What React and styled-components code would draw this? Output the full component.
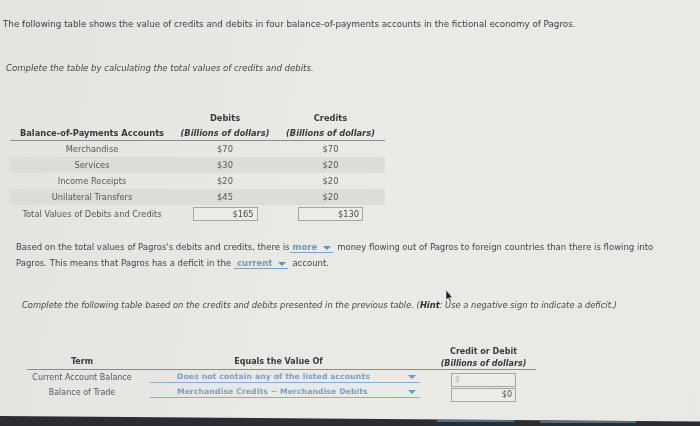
import React from "react";
import styled, { createGlobalStyle } from "styled-components";

const GlobalStyle = createGlobalStyle`
  html, body { margin: 0; padding: 0; }
  body {
    background: #e6e6e2;
    font-family: "DejaVu Sans", Verdana, sans-serif;
  }
`;

const Page = styled.div`
  position: relative;
  width: 700px;
  height: 426px;
  overflow: hidden;
  display: flex;
  flex-direction: column;
  background: linear-gradient(100deg, #e3e3df 0%, #eaeae6 55%, #e8e8e4 100%);
  color: #4d4d4d;
`;

const Content = styled.div`
  flex: 1;
  padding: 18px 0 0 3px;
  filter: blur(0.3px);
`;

const Intro = styled.p`
  margin: 0;
  font-size: 8.75px;
  line-height: 12px;
  color: #3c3c3c;
  white-space: nowrap;
`;

const Instruction = styled.p`
  margin: ${(p) => p.$top}px 0 0 ${(p) => p.$left}px;
  font-size: ${(p) => p.$size}px;
  line-height: 12px;
  font-style: italic;
  color: #474747;
  white-space: nowrap;
  b { font-style: italic; color: #2f2f2f; }
`;

const Table = styled.div`
  display: grid;
  grid-template-columns: ${(p) => p.$cols};
  margin: ${(p) => p.$margin};
  width: max-content;
  font-size: ${(p) => p.$size}px;
`;

const Cell = styled.div`
  height: ${(p) => p.$h || 16}px;
  display: flex;
  align-items: center;
  justify-content: ${(p) => (p.$start ? "flex-start" : "center")};
  white-space: nowrap;
  font-weight: ${(p) => (p.$bold ? 700 : 400)};
  font-style: ${(p) => (p.$italic ? "italic" : "normal")};
  color: ${(p) => (p.$bold || p.$italic ? "#3a3a3a" : "#575757")};
  background: ${(p) => (p.$stripe ? "#dcdcd8" : "transparent")};
  border-bottom: ${(p) => (p.$rule ? "1px solid #8c8c8a" : "none")};
  box-sizing: border-box;
  padding: ${(p) => p.$pad || "0"};
`;

const Box = styled.div`
  width: 65px;
  height: 14px;
  box-sizing: border-box;
  border: 1px solid #a5a5a2;
  background: #ebebe8;
  display: flex;
  align-items: center;
  justify-content: ${(p) => (p.$left ? "flex-start" : "flex-end")};
  padding: 0 3px;
  color: ${(p) => (p.$faint ? "#b3b3b3" : "#4a4a4a")};
`;

const Paragraph = styled.p`
  margin: 17px 0 0 13px;
  font-size: 8.5px;
  line-height: 16px;
  color: #444;
  white-space: nowrap;
`;

const Choice = styled.span`
  display: inline-flex;
  align-items: center;
  gap: 6px;
  color: #6f98bd;
  border-bottom: 1px solid #7aa3c6;
  padding: 0 2px 0 3px;
  margin: 0 4px 0 ${(p) => p.$ml}px;
  line-height: 9px;
  font-weight: 700;
`;

const Arrow = styled.span`
  width: 0;
  height: 0;
  border-left: 4px solid transparent;
  border-right: 4px solid transparent;
  border-top: 4px solid ${(p) => p.$color || "#5d8fbd"};
`;

const Select = styled.div`
  width: 270px;
  height: 11px;
  box-sizing: border-box;
  border-bottom: 1px solid #86aed0;
  display: flex;
  align-items: center;
  justify-content: space-between;
  padding: 0 4px 1px 27px;
  color: #7a9fc2;
  font-weight: 700;
  font-size: 7.7px;
  letter-spacing: 0.1px;
`;

const Cursor = styled.svg`
  position: absolute;
  left: 445px;
  top: 289px;
`;

const BottomBar = styled.div`
  position: relative;
  height: 10px;
  background: #2b2d33;
  clip-path: polygon(0 0, 100% 55%, 100% 100%, 0 100%);
`;

const Tab = styled.div`
  position: absolute;
  top: ${(p) => p.$top}px;
  left: ${(p) => p.$left}px;
  width: ${(p) => p.$w}px;
  height: 2px;
  background: #4f6d8a;
`;

const rows = [
  ["Merchandise", "$70", "$70"],
  ["Services", "$30", "$20"],
  ["Income Receipts", "$20", "$20"],
  ["Unilateral Transfers", "$45", "$20"],
];

export default function App() {
  return (
    <Page>
      <GlobalStyle />
      <Content>
        <Intro>
          The following table shows the value of credits and debits in four balance-of-payments accounts in the fictional economy of Pagros.
        </Intro>
        <Instruction $top={32} $left={3} $size={8.55}>
          Complete the table by calculating the total values of credits and debits.
        </Instruction>

        <Table $cols="164px 102px 109px" $margin="37px 0 0 7px" $size={8.3}>
          <Cell $h={14} />
          <Cell $h={14} $bold>Debits</Cell>
          <Cell $h={14} $bold>Credits</Cell>
          <Cell $h={16} $bold $rule>Balance-of-Payments Accounts</Cell>
          <Cell $h={16} $italic $bold $rule>(Billions of dollars)</Cell>
          <Cell $h={16} $italic $bold $rule>(Billions of dollars)</Cell>
          {rows.map(([name, d, c], i) => (
            <React.Fragment key={name}>
              <Cell $stripe={i % 2 === 1}>{name}</Cell>
              <Cell $stripe={i % 2 === 1}>{d}</Cell>
              <Cell $stripe={i % 2 === 1}>{c}</Cell>
            </React.Fragment>
          ))}
          <Cell $h={17}>Total Values of Debits and Credits</Cell>
          <Cell $h={17}><Box>$165</Box></Cell>
          <Cell $h={17}><Box>$130</Box></Cell>
        </Table>

        <Paragraph>
          Based on the total values of Pagros's debits and credits, there is
          <Choice $ml={0}>more <Arrow /></Choice>
          money flowing out of Pagros to foreign countries than there is flowing into
          <br />
          Pagros. This means that Pagros has a deficit in the
          <Choice $ml={3}>current <Arrow /></Choice>
          account.
        </Paragraph>

        <Instruction $top={28} $left={19} $size={8.36}>
          Complete the following table based on the credits and debits presented in the previous table. (<b>Hint</b>: Use a negative sign to indicate a deficit.)
        </Instruction>

        <Table $cols="110px 283px 116px" $margin="34px 0 0 24px" $size={8}>
          <Cell $h={13} />
          <Cell $h={13} />
          <Cell $h={13} $bold $pad="0 0 0 11px">Credit or Debit</Cell>
          <Cell $h={12} $bold $rule $pad="0 0 5px 0">Term</Cell>
          <Cell $h={12} $bold $rule $pad="0 0 5px 0">Equals the Value Of</Cell>
          <Cell $h={12} $italic $bold $rule $pad="0 0 0 11px">(Billions of dollars)</Cell>
          <Cell $h={15}>Current Account Balance</Cell>
          <Cell $h={15} $start $pad="0 0 0 13px">
            <Select>Does not contain any of the listed accounts <Arrow $color="#6d9ac4" /></Select>
          </Cell>
          <Cell $h={15} $pad="4px 0 0 11px"><Box $left $faint>$</Box></Cell>
          <Cell $h={15}>Balance of Trade</Cell>
          <Cell $h={15} $start $pad="0 0 0 13px">
            <Select>Merchandise Credits − Merchandise Debits <Arrow $color="#6d9ac4" /></Select>
          </Cell>
          <Cell $h={15} $pad="4px 0 0 11px"><Box>$0</Box></Cell>
        </Table>
      </Content>

      <Cursor width="8" height="14" viewBox="0 0 8 14">
        <path d="M1 1 L1 11 L3.2 9 L5 13 L6.3 12.4 L4.6 8.6 L7.4 8.4 Z" fill="#1b1b1b" stroke="#f2f2f2" strokeWidth="0.6" />
      </Cursor>

      <BottomBar>
        <Tab $left={437} $top={4} $w={77} />
        <Tab $left={540} $top={5} $w={96} />
      </BottomBar>
    </Page>
  );
}
